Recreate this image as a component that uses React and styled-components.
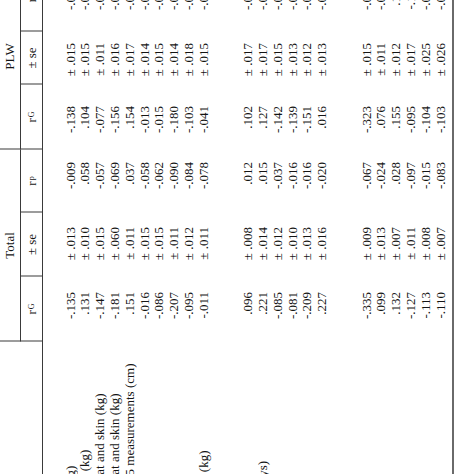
import React from "react";
import styled, { createGlobalStyle } from "styled-components";

const Global = createGlobalStyle`
  html, body { margin: 0; padding: 0; background: #fff; }
  body { overflow: hidden; }
`;

const COLS = "218.5px 65px 64px 63px 65px 53px 68px";
const PADS = [0, 15, 14, 12, 21, 11, 19];

const Page = styled.div`
  width: 474px;
  height: 474px;
  overflow: hidden;
  background: #fff;
  font-family: "Liberation Serif", "Times New Roman", serif;
  font-size: 13px;
  color: #151515;
`;

const Rotated = styled.div`
  width: 596.5px;
  transform-origin: 0 0;
  transform: translateY(560.5px) rotate(-90deg);
`;

const Head = styled.div`
  display: grid;
  grid-template-columns: ${COLS};
  grid-template-rows: 21px 21px;
  border-bottom: 1px solid #3a3a3a;
`;

const HeadCell = styled.div`
  display: flex;
  align-items: center;
  justify-content: ${(p) => (p.$left ? "flex-start" : "center")};
  padding-left: ${(p) => (p.$left ? "6px" : "0")};
  white-space: nowrap;
  border-left: ${(p) => (p.$noLeft ? "none" : "1px solid #3a3a3a")};
  border-bottom: ${(p) => (p.$group ? "1px solid #3a3a3a" : "none")};
  grid-column: ${(p) => p.$col || "auto"};
  grid-row: ${(p) => p.$row || "auto"};
`;

const Sub = styled.sub`
  font-size: 8px;
  vertical-align: -2px;
  margin-left: 1px;
`;

const Body = styled.div`
  padding: 20.6px 0 3.6px;
  border-bottom: 2px solid #6a6a6a;
`;

const Row = styled.div`
  display: grid;
  grid-template-columns: ${COLS};
  height: 14.8px;
  line-height: 14.8px;
`;

const Label = styled.div`
  padding-left: 6px;
  white-space: nowrap;
  overflow: hidden;
`;

const Num = styled.div`
  text-align: right;
  padding-right: ${(p) => p.$pr}px;
  white-space: pre;
`;

const rows = [
  ["Ham weight (kg)", "-.135", ".013", "-.009", "-.138", ".015", "-.052"],
  ["Total lean meat (kg)", ".131", ".010", ".058", ".104", ".015", "-.041"],
  ["Intermuscular fat and skin (kg)", "-.147", ".015", "-.057", "-.077", ".011", "-.063"],
  ["Subcutaneous fat and skin (kg)", "-.181", ".060", "-.069", "-.156", ".016", "-.048"],
  ["Backfat depth, 5 measurements (cm)", ".151", ".011", ".037", ".154", ".017", "-.035"],
  ["Lean (%)", "-.016", ".015", "-.058", "-.013", ".014", "-.070"],
  ["Fat (%)", "-.086", ".015", "-.062", "-.015", ".015", "-.044"],
  ["Ham (%)", "-.207", ".011", "-.090", "-.180", ".014", "-.081"],
  ["Loin (kg)", "-.095", ".012", "-.084", "-.103", ".018", "-.067"],
  ["Carcass weight (kg)", "-.011", ".011", "-.078", "-.041", ".015", "-.059"],
  null,
  null,
  ["Daily gain (g)", ".096", ".008", ".012", ".102", ".017", "-.022"],
  ["Test period (days)", ".221", ".014", ".015", ".127", ".017", "-.038"],
  ["FCR (kg/kg)", "-.085", ".012", "-.037", "-.142", ".015", "-.046"],
  ["Age (days)", "-.081", ".010", "-.016", "-.139", ".013", "-.029"],
  ["Weight (kg)", "-.209", ".013", "-.016", "-.151", ".012", "-.055"],
  ["Backfat (mm)", ".227", ".016", "-.020", ".016", ".013", "-.033"],
  null,
  null,
  ["pH1", "-.335", ".009", "-.067", "-.323", ".015", "-.074"],
  ["pH24", ".099", ".013", "-.024", ".076", ".011", "-.012"],
  ["Drip loss (%)", ".132", ".007", ".028", ".155", ".012", ".106"],
  ["L*", "-.127", ".011", "-.097", "-.095", ".017", "-.118"],
  ["a*", "-.113", ".008", "-.015", "-.104", ".025", "-.061"],
  ["b*", "-.110", ".007", "-.083", "-.103", ".026", "-.057"],
];

const SE = [2, 5];

export default function App() {
  return (
    <Page>
      <Global />
      <Rotated>
        <Head>
          <HeadCell $left $noLeft $row="1 / span 2" $col="1">
            Measured traits
          </HeadCell>
          <HeadCell $group $col="2 / span 3" $row="1">Total</HeadCell>
          <HeadCell $group $col="5 / span 3" $row="1">PLW</HeadCell>
          <HeadCell $row="2">r<Sub>G</Sub></HeadCell>
          <HeadCell $row="2">± se</HeadCell>
          <HeadCell $row="2">r<Sub>p</Sub></HeadCell>
          <HeadCell $row="2">r<Sub>G</Sub></HeadCell>
          <HeadCell $row="2">± se</HeadCell>
          <HeadCell $row="2">r<Sub>p</Sub></HeadCell>
        </Head>
        <Body>
          {rows.map((r, i) =>
            r ? (
              <Row key={i}>
                <Label>{r[0]}</Label>
                {r.slice(1).map((v, j) => (
                  <Num key={j} $pr={PADS[j + 1]}>
                    {SE.includes(j + 1) ? `± ${v}` : v}
                  </Num>
                ))}
              </Row>
            ) : (
              <Row key={i} />
            )
          )}
        </Body>
      </Rotated>
    </Page>
  );
}
